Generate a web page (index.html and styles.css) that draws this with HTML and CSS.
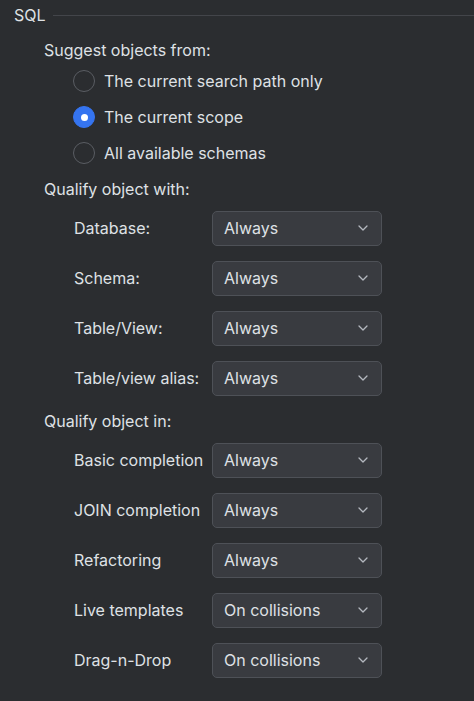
FILE: index.html
```html
<!DOCTYPE html>
<html>
<head>
<meta charset="utf-8">
<link rel="stylesheet" href="styles.css">
</head>
<body>
<div class="panel">
  <div class="header"><span class="header-title">SQL</span><span class="header-line"></span></div>

  <div class="group-title first">Suggest objects from:</div>
  <div class="radios">
    <label class="radio-row"><span class="radio"></span><span>The current search path only</span></label>
    <label class="radio-row"><span class="radio checked"></span><span>The current scope</span></label>
    <label class="radio-row"><span class="radio"></span><span>All available schemas</span></label>
  </div>

  <div class="group-title">Qualify object with:</div>
  <div class="rows">
    <div class="row"><span class="label">Database:</span><div class="select"><span>Always</span><svg class="chev" width="10" height="6" viewBox="0 0 10 6"><path d="M1 1l4 4 4-4" fill="none" stroke="#b4b8bf" stroke-width="1.3" stroke-linecap="round" stroke-linejoin="round"/></svg></div></div>
    <div class="row"><span class="label">Schema:</span><div class="select"><span>Always</span><svg class="chev" width="10" height="6" viewBox="0 0 10 6"><path d="M1 1l4 4 4-4" fill="none" stroke="#b4b8bf" stroke-width="1.3" stroke-linecap="round" stroke-linejoin="round"/></svg></div></div>
    <div class="row"><span class="label">Table/View:</span><div class="select"><span>Always</span><svg class="chev" width="10" height="6" viewBox="0 0 10 6"><path d="M1 1l4 4 4-4" fill="none" stroke="#b4b8bf" stroke-width="1.3" stroke-linecap="round" stroke-linejoin="round"/></svg></div></div>
    <div class="row"><span class="label">Table/view alias:</span><div class="select"><span>Always</span><svg class="chev" width="10" height="6" viewBox="0 0 10 6"><path d="M1 1l4 4 4-4" fill="none" stroke="#b4b8bf" stroke-width="1.3" stroke-linecap="round" stroke-linejoin="round"/></svg></div></div>
  </div>

  <div class="group-title">Qualify object in:</div>
  <div class="rows">
    <div class="row"><span class="label">Basic completion</span><div class="select"><span>Always</span><svg class="chev" width="10" height="6" viewBox="0 0 10 6"><path d="M1 1l4 4 4-4" fill="none" stroke="#b4b8bf" stroke-width="1.3" stroke-linecap="round" stroke-linejoin="round"/></svg></div></div>
    <div class="row"><span class="label">JOIN completion</span><div class="select"><span>Always</span><svg class="chev" width="10" height="6" viewBox="0 0 10 6"><path d="M1 1l4 4 4-4" fill="none" stroke="#b4b8bf" stroke-width="1.3" stroke-linecap="round" stroke-linejoin="round"/></svg></div></div>
    <div class="row"><span class="label">Refactoring</span><div class="select"><span>Always</span><svg class="chev" width="10" height="6" viewBox="0 0 10 6"><path d="M1 1l4 4 4-4" fill="none" stroke="#b4b8bf" stroke-width="1.3" stroke-linecap="round" stroke-linejoin="round"/></svg></div></div>
    <div class="row"><span class="label">Live templates</span><div class="select"><span>On collisions</span><svg class="chev" width="10" height="6" viewBox="0 0 10 6"><path d="M1 1l4 4 4-4" fill="none" stroke="#b4b8bf" stroke-width="1.3" stroke-linecap="round" stroke-linejoin="round"/></svg></div></div>
    <div class="row"><span class="label">Drag-n-Drop</span><div class="select"><span>On collisions</span><svg class="chev" width="10" height="6" viewBox="0 0 10 6"><path d="M1 1l4 4 4-4" fill="none" stroke="#b4b8bf" stroke-width="1.3" stroke-linecap="round" stroke-linejoin="round"/></svg></div></div>
  </div>
</div>
</body>
</html>
```

FILE: styles.css
```css
html, body {
  margin: 0;
  padding: 0;
  background: #2b2d30;
}
body {
  font-family: Inter, "Noto Sans", sans-serif;
  font-size: 16px;
  color: #dfe1e5;
  width: 474px;
  height: 701px;
  overflow: hidden;
}
.panel {
  display: flex;
  flex-direction: column;
}
.header {
  display: flex;
  align-items: center;
  height: 30px;
  padding-left: 14px;
}
.header-title {
  line-height: 20px;
}
.header-line {
  flex: 1;
  height: 1px;
  background: #43454a;
  margin-left: 7px;
}
.group-title {
  height: 20px;
  line-height: 20px;
  padding-left: 44px;
  margin-top: 8px;
}
.group-title.first {
  margin-top: 10px;
}
.radios {
  display: flex;
  flex-direction: column;
  margin-top: 3px;
  padding-left: 73px;
}
.radio-row {
  display: flex;
  align-items: center;
  height: 36px;
  gap: 9px;
}
.radio {
  box-sizing: border-box;
  width: 22px;
  height: 22px;
  border-radius: 50%;
  border: 1.5px solid #5a5d63;
  display: flex;
  align-items: center;
  justify-content: center;
}
.radio.checked {
  background: #3574f0;
  border-color: #3574f0;
}
.radio.checked::after {
  content: "";
  width: 7px;
  height: 7px;
  border-radius: 50%;
  background: #ffffff;
}
.rows {
  display: flex;
  flex-direction: column;
  margin-top: 4px;
  padding-left: 74px;
}
.row {
  display: flex;
  align-items: center;
  height: 50px;
}
.label {
  width: 138px;
  white-space: nowrap;
}
.select {
  box-sizing: border-box;
  width: 170px;
  height: 35px;
  display: flex;
  align-items: center;
  justify-content: space-between;
  padding: 0 13px 0 11px;
  background: #393b40;
  border: 1px solid #4e5157;
  border-radius: 5px;
}
.chev {
  display: block;
}
```
